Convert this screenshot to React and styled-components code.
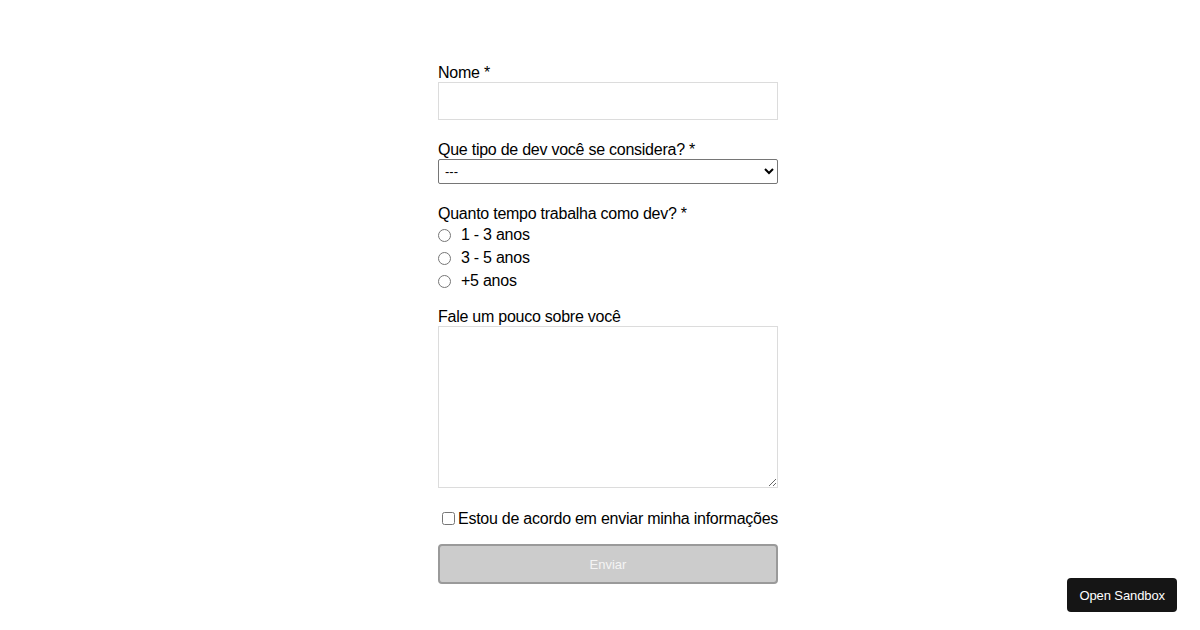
import React, { useState } from "react";
import styled, { createGlobalStyle } from "styled-components";

const GlobalStyle = createGlobalStyle`
  html, body {
    margin: 0;
    padding: 0;
    background: #fff;
  }
  body {
    font-family: "Liberation Sans", Arial, sans-serif;
    color: #000;
  }
`;

const Page = styled.div`
  width: 1200px;
  height: 630px;
  display: flex;
  justify-content: center;
  padding-left: 16px;
  padding-top: 63px;
  box-sizing: border-box;
  position: relative;
  overflow: hidden;
`;

const Form = styled.form`
  width: 340px;
  display: flex;
  flex-direction: column;
  letter-spacing: -0.25px;
`;

const Field = styled.div`
  display: flex;
  flex-direction: column;
  margin-bottom: ${(p) => p.$gap ?? 20}px;
`;

const Label = styled.label`
  font-size: 16px;
  line-height: 19px;
`;

const TextInput = styled.input`
  height: 38px;
  box-sizing: border-box;
  border: 1px solid #dcdcdc;
  padding: 0 8px;
  font-size: 16px;
  font-family: inherit;
  outline: none;
`;

const Select = styled.select`
  height: 25px;
  box-sizing: border-box;
  border: 1px solid #767676;
  border-radius: 2px;
  background: #fff;
  font-size: 13px;
  font-family: inherit;
  padding: 0 2px;
  color: #000;
`;

const RadioRow = styled.label`
  display: flex;
  align-items: center;
  height: 23px;
  padding-top: 1px;
  box-sizing: border-box;
  font-size: 16px;
`;

const Radio = styled.input`
  width: 13px;
  height: 13px;
  margin: 0 10px 0 0;
`;

const TextArea = styled.textarea`
  height: 162px;
  box-sizing: border-box;
  border: 1px solid #dcdcdc;
  font-family: inherit;
  font-size: 16px;
  outline: none;
`;

const CheckRow = styled.label`
  display: flex;
  align-items: center;
  height: 19px;
  font-size: 16px;
  white-space: nowrap;
`;

const Check = styled.input`
  width: 13px;
  height: 13px;
  margin: 0 3px 0 4px;
`;

const SubmitButton = styled.button`
  height: 40px;
  box-sizing: border-box;
  background: #cccccc;
  border: 2px solid #9a9a9a;
  border-radius: 4px;
  color: #f4f4f4;
  font-family: inherit;
  font-size: 13px;
`;

const SandboxButton = styled.button`
  position: absolute;
  right: 23px;
  bottom: 18px;
  height: 34px;
  padding: 0 12px;
  background: #151515;
  color: #fff;
  border: none;
  border-radius: 4px;
  font-family: "Liberation Sans", Arial, sans-serif;
  font-size: 13px;
  letter-spacing: -0.1px;
`;

const experiences = ["1 - 3 anos", "3 - 5 anos", "+5 anos"];

const App = () => {
  const [agree, setAgree] = useState(false);

  return (
    <Page>
      <GlobalStyle />
      <Form onSubmit={(e) => e.preventDefault()}>
        <Field>
          <Label htmlFor="nome">Nome *</Label>
          <TextInput id="nome" type="text" />
        </Field>

        <Field>
          <Label htmlFor="tipo">Que tipo de dev você se considera? *</Label>
          <Select id="tipo" defaultValue="">
            <option value="">---</option>
            <option value="front">Front-end</option>
            <option value="back">Back-end</option>
            <option value="full">Full-stack</option>
          </Select>
        </Field>

        <Field $gap={15}>
          <Label>Quanto tempo trabalha como dev? *</Label>
          {experiences.map((exp) => (
            <RadioRow key={exp}>
              <Radio type="radio" name="tempo" value={exp} />
              {exp}
            </RadioRow>
          ))}
        </Field>

        <Field $gap={21}>
          <Label htmlFor="sobre">Fale um pouco sobre você</Label>
          <TextArea id="sobre" />
        </Field>

        <Field $gap={16}>
          <CheckRow>
            <Check
              type="checkbox"
              checked={agree}
              onChange={(e) => setAgree(e.target.checked)}
            />
            Estou de acordo em enviar minha informações
          </CheckRow>
        </Field>

        <SubmitButton type="submit" disabled={!agree}>
          Enviar
        </SubmitButton>
      </Form>
      <SandboxButton>Open Sandbox</SandboxButton>
    </Page>
  );
};

export default App;
